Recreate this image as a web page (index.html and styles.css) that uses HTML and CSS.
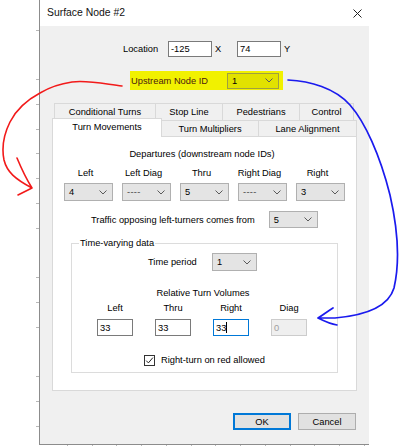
FILE: index.html
```html
<!DOCTYPE html>
<html>
<head>
<meta charset="utf-8">
<title>Surface Node #2</title>
<link rel="stylesheet" href="styles.css">
</head>
<body>
<div class="window">
  <div class="titlebar">
    <span class="title">Surface Node #2</span>
    <svg class="close" viewBox="0 0 9 9"><path d="M0.5 0.5 L8.5 8.5 M8.5 0.5 L0.5 8.5"/></svg>
  </div>
  <div class="client">
    <div class="loc-row">
      <span class="loc-label">Location</span>
      <span class="edit w44">-125</span>
      <span class="axis">X</span>
      <span class="edit w44">74</span>
      <span class="axis">Y</span>
    </div>

    <div class="upstream">
      <span class="up-label">Upstream Node ID</span>
      <span class="combo combo-hl up-combo"><span>1</span><svg class="chev" viewBox="0 0 8 5"><path d="M0.5 0.5 L4 4 L7.5 0.5"/></svg></span>
    </div>

    <div class="tabs">
      <div class="tab-row back">
        <div class="tab t-cond">Conditional Turns</div>
        <div class="tab t-stop">Stop Line</div>
        <div class="tab t-ped">Pedestrians</div>
        <div class="tab t-ctrl">Control</div>
      </div>
      <div class="tab-row front">
        <div class="tab selected t-turn">Turn Movements</div>
        <div class="tab t-mult">Turn Multipliers</div>
        <div class="tab t-lane">Lane Alignment</div>
      </div>
      <div class="panel">
        <div class="dep-title">Departures (downstream node IDs)</div>
        <div class="dep-grid dep-labels">
          <span>Left</span><span>Left Diag</span><span>Thru</span><span>Right Diag</span><span>Right</span>
        </div>
        <div class="dep-grid dep-combos">
          <span class="combo dep-combo"><span>4</span><svg class="chev" viewBox="0 0 8 5"><path d="M0.5 0.5 L4 4 L7.5 0.5"/></svg></span>
          <span class="combo dep-combo"><span class="dash">----</span><svg class="chev" viewBox="0 0 8 5"><path d="M0.5 0.5 L4 4 L7.5 0.5"/></svg></span>
          <span class="combo dep-combo"><span>5</span><svg class="chev" viewBox="0 0 8 5"><path d="M0.5 0.5 L4 4 L7.5 0.5"/></svg></span>
          <span class="combo dep-combo"><span class="dash">----</span><svg class="chev" viewBox="0 0 8 5"><path d="M0.5 0.5 L4 4 L7.5 0.5"/></svg></span>
          <span class="combo dep-combo"><span>3</span><svg class="chev" viewBox="0 0 8 5"><path d="M0.5 0.5 L4 4 L7.5 0.5"/></svg></span>
        </div>
        <div class="traffic">
          <span>Traffic opposing left-turners comes from</span>
          <span class="combo traffic-combo"><span>5</span><svg class="chev" viewBox="0 0 8 5"><path d="M0.5 0.5 L4 4 L7.5 0.5"/></svg></span>
        </div>
        <fieldset class="group">
          <legend class="group-title">Time-varying data</legend>
          <div class="tp-row">
            <span class="tp-label">Time period</span>
            <span class="combo tp-combo"><span>1</span><svg class="chev" viewBox="0 0 8 5"><path d="M0.5 0.5 L4 4 L7.5 0.5"/></svg></span>
          </div>
          <div class="rtv-title">Relative Turn Volumes</div>
          <div class="rtv-grid rtv-labels">
            <span>Left</span><span>Thru</span><span>Right</span><span>Diag</span>
          </div>
          <div class="rtv-grid rtv-inputs">
            <span class="edit vol">33</span>
            <span class="edit vol">33</span>
            <span class="edit vol focused">33<span class="caret"></span></span>
            <span class="edit vol disabled">0</span>
          </div>
          <div class="rto">
            <svg class="check" viewBox="0 0 11 11"><rect x="0.5" y="0.5" width="10" height="10"/><path d="M2.2 5.6 L4.4 7.9 L8.9 2.6"/></svg>
            <span class="rto-label">Right-turn on red allowed</span>
          </div>
        </fieldset>
      </div>
    </div>

    <div class="buttons">
      <span class="btn default">OK</span>
      <span class="btn">Cancel</span>
    </div>
  </div>
</div>

<svg class="annot" viewBox="0 0 400 446">
  <path class="red" d="M122 86 C105 84 88 80 72 82 C58 84 50 87 40 93 C25 101 16 110 10 122 C3 136 2 150 4 160 C7 172 15 179 32 188 M17 158 C22 170 27 180 32 188 L18 195"/>
  <path class="blue" d="M288 80 C310 81 335 88 350 105 C365 122 380 155 390 195 C398 230 400 262 394 288 C389 305 370 315 335 318 L321 318 M333 308 C328 311 323 315 318 318 C324 321 330 324 337 325"/>
</svg>
</body>
</html>
```

FILE: styles.css
```css
* {
  box-sizing: border-box;
}

html, body {
  margin: 0;
  padding: 0;
}

body {
  position: relative;
  width: 400px;
  height: 446px;
  overflow: hidden;
  font-family: "Liberation Sans", Arial, sans-serif;
  font-size: 9.3px;
  line-height: 12px;
  color: #000;
  background-color: #fff;
  background-image:
    repeating-linear-gradient(to bottom, transparent 0, transparent 23.75px, #b8b8b8 23.75px, #b8b8b8 24.75px),
    repeating-linear-gradient(to right, transparent 0, transparent 23.75px, #b8b8b8 23.75px, #b8b8b8 24.75px);
  background-repeat: no-repeat;
  background-size: 3px 446px, 330px 1px;
  background-position: 36px 5.5px, 43px 445px;
}

.window {
  margin-left: 39px;
  width: 330px;
  height: 445px;
  border-left: 1px solid #8c8c8c;
  border-bottom: 1px solid #8c8c8c;
  display: flex;
  flex-direction: column;
}

.titlebar {
  flex: none;
  height: 26px;
  background: #fff;
  display: flex;
  align-items: center;
  padding: 0 7px 0 7px;
}

.title {
  flex: 1;
  font-size: 10.4px;
  color: #111;
}

.close {
  width: 9px;
  height: 9px;
  fill: none;
  stroke: #222;
  stroke-width: 1;
}

.client {
  flex: 1;
  background: #f0f0f0;
  padding-top: 15px;
  display: flex;
  flex-direction: column;
}

/* Location row */
.loc-row {
  display: flex;
  align-items: center;
  height: 16px;
  margin-left: 83px;
}

.loc-label {
  width: 45px;
}

.edit {
  height: 16px;
  border: 1px solid #7a7a7a;
  background: #fff;
  padding-left: 2px;
  display: flex;
  align-items: center;
}

.w44 {
  width: 44px;
}

.axis {
  width: 25px;
  padding-left: 3px;
}

/* Upstream node */
.upstream {
  margin-top: 14px;
  margin-left: 90px;
  width: 153px;
  height: 19px;
  background: #f1f100;
  display: flex;
  align-items: center;
  padding-left: 1px;
}

.up-label {
  width: 96px;
  color: #4a2010;
}

.combo {
  display: flex;
  align-items: center;
  justify-content: space-between;
  padding: 0 5px 0 4px;
  border: 1px solid #b0b0b0;
  background: #e4e4e4;
}

.combo-hl {
  background: #e2e200;
  border-color: #a0a040;
}

.up-combo {
  width: 52px;
  height: 16px;
}

.chev {
  width: 8px;
  height: 5px;
  fill: none;
  stroke: #5a5a5a;
  stroke-width: 1;
}

.dash {
  color: #444;
  letter-spacing: 0.3px;
}

/* Tabs */
.tabs {
  margin-top: 13px;
  margin-left: 12px;
  width: 305px;
}

.tab-row {
  display: flex;
}

.back {
  height: 17px;
  padding-left: 2px;
}

.front {
  height: 16px;
  align-items: flex-end;
}

.tab {
  border: 1px solid #d9d9d9;
  border-bottom: none;
  background: #f0f0f0;
  text-align: center;
  margin-left: -1px;
}

.tab:first-child {
  margin-left: 0;
}

.back .tab {
  height: 17px;
  line-height: 16px;
}

.front .tab {
  height: 16px;
  line-height: 15px;
  padding-top: 1px;
}

.front .tab.selected {
  position: relative;
  z-index: 2;
  height: 19px;
  margin-bottom: -1px;
  background: #fff;
  line-height: 12px;
  padding-top: 2px;
}

.t-cond { width: 102px; }
.t-stop { width: 68px; }
.t-ped  { width: 78px; }
.t-ctrl { width: 55px; }
.t-turn { width: 110px; }
.t-mult { width: 98px; }
.t-lane { width: 99px; }

.panel {
  height: 255px;
  background: #fff;
  border: 1px solid #d9d9d9;
  display: flex;
  flex-direction: column;
  align-items: flex-start;
}

.dep-title {
  margin-top: 11px;
  align-self: stretch;
  text-align: center;
  padding-right: 5px;
}

.dep-grid {
  display: grid;
  grid-template-columns: repeat(5, 49px);
  column-gap: 9px;
}

.dep-labels {
  margin-top: 7px;
  margin-left: 8px;
  text-align: center;
}

.dep-combos {
  margin-top: 4px;
  margin-left: 11px;
}

.dep-combo {
  height: 18px;
}

.traffic {
  display: flex;
  align-items: center;
  height: 17px;
  margin-top: 10px;
  margin-left: 38px;
}

.traffic-combo {
  width: 49px;
  height: 17px;
  margin-left: 14px;
}

/* Group box */
.group {
  margin: 9px 0 0 18px;
  width: 267px;
  border: 1px solid #dcdcdc;
  padding: 4px 0 6px 0;
}

.group-title {
  margin-left: 7px;
  padding: 0 1px;
  line-height: 12px;
}

.tp-row {
  display: flex;
  align-items: center;
  height: 18px;
  margin-left: 76px;
}

.tp-label {
  width: 64px;
}

.tp-combo {
  width: 45px;
  height: 18px;
}

.rtv-title {
  margin-top: 16px;
  text-align: center;
  padding-right: 3px;
}

.rtv-grid {
  display: grid;
  grid-template-columns: repeat(4, 36px);
  column-gap: 22px;
  margin-left: 25px;
}

.rtv-labels {
  margin-top: 3px;
  text-align: center;
}

.rtv-inputs {
  margin-top: 5px;
}

.vol {
  height: 17px;
}

.focused {
  border-color: #0078d7;
}

.caret {
  display: inline-block;
  width: 1px;
  height: 11px;
  background: #000;
}

.disabled {
  background: #efefef;
  border-color: #cccccc;
  color: #a0a0a0;
}

.rto {
  display: flex;
  align-items: center;
  height: 12px;
  margin: 18px 0 0 72px;
}

.check {
  width: 11px;
  height: 11px;
  fill: none;
}

.check rect {
  fill: #fff;
  stroke: #333;
  stroke-width: 1;
}

.check path {
  stroke: #222;
  stroke-width: 1;
}

.rto-label {
  margin-left: 6px;
}

/* Buttons */
.buttons {
  display: flex;
  justify-content: flex-end;
  gap: 7px;
  margin-top: 22px;
  padding-right: 13px;
}

.btn {
  width: 58px;
  height: 17px;
  border: 1px solid #adadad;
  background: #e1e1e1;
  display: flex;
  align-items: center;
  justify-content: center;
}

.btn.default {
  border: 2px solid #0078d7;
}

/* Hand-drawn annotations over the dialog */
.annot {
  position: absolute;
  left: 0;
  top: 0;
  width: 400px;
  height: 446px;
  pointer-events: none;
  fill: none;
  stroke-linecap: round;
  stroke-linejoin: round;
}

.annot .red {
  stroke: #f21a1a;
  stroke-width: 1.6;
}

.annot .blue {
  stroke: #1a1aee;
  stroke-width: 1.7;
}
```
